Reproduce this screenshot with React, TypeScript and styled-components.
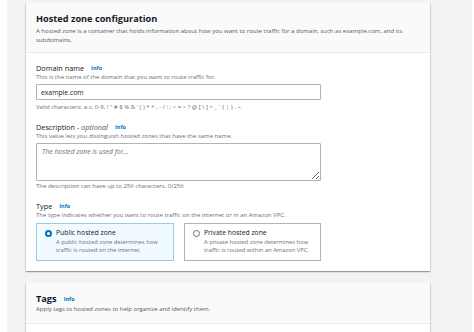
import styled, { createGlobalStyle } from "styled-components"

const GlobalStyle = createGlobalStyle`
  html, body {
    margin: 0;
    padding: 0;
    background: #ffffff;
  }
  body {
    font-family: "Open Sans", "Noto Sans", sans-serif;
    color: #16191f;
  }
`

export default function App() {
  return (
    <>
      <GlobalStyle />
      <Page>
        <Canvas>
          <Card>
            <CardHeader>
              <Title>Hosted zone configuration</Title>
              <HeaderText>
                A hosted zone is a container that holds information about how
                you want to route traffic for a domain, such as example.com, and
                its subdomains.
              </HeaderText>
            </CardHeader>
            <CardBody>
              <Field>
                <Label>
                  Domain name<Info>Info</Info>
                </Label>
                <Hint>
                  This is the name of the domain that you want to route traffic
                  for.
                </Hint>
                <Input defaultValue="example.com" />
                <Hint $top={3}>
                  Valid characters: a-z, 0-9, ! " # $ % &amp; ' ( ) * + , - / :
                  ; &lt; = &gt; ? @ [ \ ] ^ _ ` {"{"} | {"}"} . ~
                </Hint>
              </Field>
              <Field>
                <Label>
                  Description - <em>optional</em>
                  <Info>Info</Info>
                </Label>
                <Hint>
                  This value lets you distinguish hosted zones that have the
                  same name.
                </Hint>
                <TextArea placeholder="The hosted zone is used for..." />
                <Hint $top={1}>
                  The description can have up to 256 characters. 0/256
                </Hint>
              </Field>
              <Field $gap={10}>
                <Label>
                  Type<Info>Info</Info>
                </Label>
                <Hint>
                  The type indicates whether you want to route traffic on the
                  internet or in an Amazon VPC.
                </Hint>
                <Tiles>
                  <Tile $selected>
                    <Radio $selected />
                    <TileText>
                      <TileTitle>Public hosted zone</TileTitle>
                      <TileDesc>
                        A public hosted zone determines how traffic is routed on
                        the internet.
                      </TileDesc>
                    </TileText>
                  </Tile>
                  <Tile>
                    <Radio />
                    <TileText>
                      <TileTitle>Private hosted zone</TileTitle>
                      <TileDesc>
                        A private hosted zone determines how traffic is routed
                        within an Amazon VPC.
                      </TileDesc>
                    </TileText>
                  </Tile>
                </Tiles>
              </Field>
            </CardBody>
          </Card>
          <Card>
            <CardHeader $tall>
              <Title $compact>
                Tags<Info>Info</Info>
              </Title>
              <HeaderText>
                Apply tags to hosted zones to help organize and identify them.
              </HeaderText>
            </CardHeader>
            <CardBody />
          </Card>
        </Canvas>
      </Page>
    </>
  )
}

const Page = styled.div`
  width: 474px;
  height: 332px;
  box-sizing: border-box;
  padding: 0 2px 3px 7px;
  overflow: hidden;
`

const Canvas = styled.div`
  height: 100%;
  background: #f2f3f3;
  padding: 3px 42px 0 19px;
  display: flex;
  flex-direction: column;
  gap: 12px;
  overflow: hidden;
`

const Card = styled.section`
  background: #ffffff;
  box-shadow: 0 1px 1px 0 rgba(0, 28, 36, 0.25),
    1px 1px 1px 0 rgba(0, 28, 36, 0.1), -1px 1px 1px 0 rgba(0, 28, 36, 0.1);
  flex-shrink: 0;
`

const CardHeader = styled.header<{ $tall?: boolean }>`
  background: #fafafa;
  border-bottom: 1px solid #eaeded;
  padding: ${({ $tall }) => ($tall ? "10px 10px 9px" : "9px 10px 7px")};
`

const Title = styled.h2<{ $compact?: boolean }>`
  margin: 0 0 ${({ $compact }) => ($compact ? 0 : 1)}px;
  font-size: 9.2px;
  font-weight: 700;
  line-height: ${({ $compact }) => ($compact ? 12 : 14)}px;
`

const HeaderText = styled.p`
  margin: 0;
  font-size: 6px;
  line-height: 9px;
  color: #545b64;
`

const CardBody = styled.div`
  padding: 10px 10px 10px;
  display: flex;
  flex-direction: column;
  min-height: 8px;
`

const Field = styled.div<{ $gap?: number }>`
  display: flex;
  flex-direction: column;
  & + & {
    margin-top: ${({ $gap }) => $gap ?? 8}px;
  }
`

const Label = styled.label`
  font-size: 7.3px;
  line-height: 10px;

  em {
    color: #545b64;
  }
`

const Info = styled.span`
  font-size: 5.5px;
  font-weight: 700;
  color: #0073bb;
  margin-left: 7px;
  vertical-align: 1px;
`

const Hint = styled.div<{ $top?: number }>`
  font-size: 6px;
  line-height: 9px;
  color: #687078;
  margin-top: ${({ $top }) => $top ?? 0}px;
`

const Input = styled.input`
  width: 285px;
  height: 16px;
  box-sizing: border-box;
  border: 1px solid #aab7b8;
  border-radius: 1px;
  padding: 0 4px;
  margin: 2px 0 0;
  font-family: inherit;
  font-size: 6.8px;
  color: #16191f;
  outline: none;
`

const TextArea = styled.textarea`
  display: block;
  width: 285px;
  height: 38px;
  box-sizing: border-box;
  border: 1px solid #aab7b8;
  border-radius: 1px;
  padding: 3px 5px;
  margin: 2px 0 0;
  font-family: inherit;
  font-size: 6.8px;
  resize: vertical;
  outline: none;

  &::placeholder {
    color: #687078;
    font-style: italic;
  }
`

const Tiles = styled.div`
  display: grid;
  grid-template-columns: 138px 137px;
  gap: 10px;
  margin-top: 3px;
`

const Tile = styled.div<{ $selected?: boolean }>`
  height: 38px;
  box-sizing: border-box;
  border: 1px solid ${({ $selected }) => ($selected ? "#99cbe4" : "#aab7b8")};
  background: ${({ $selected }) => ($selected ? "#f1faff" : "#ffffff")};
  padding: 4px 8px 0;
  display: flex;
  gap: 4px;
`

const Radio = styled.span<{ $selected?: boolean }>`
  flex: none;
  width: 7px;
  height: 7px;
  margin-top: 1.5px;
  border-radius: 50%;
  box-sizing: border-box;
  border: ${({ $selected }) =>
    $selected ? "2px solid #0073bb" : "1px solid #687078"};
  background: #ffffff;
`

const TileText = styled.div`
  display: flex;
  flex-direction: column;
`

const TileTitle = styled.div`
  font-size: 6.8px;
  line-height: 10px;
`

const TileDesc = styled.div`
  font-size: 5.8px;
  line-height: 8px;
  color: #687078;
`
